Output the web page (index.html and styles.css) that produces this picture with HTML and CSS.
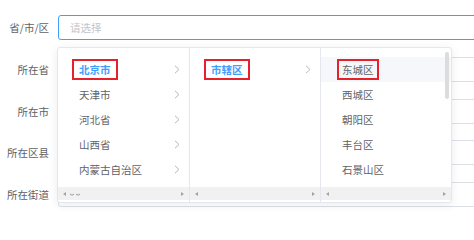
FILE: index.html
```html
<!DOCTYPE html>
<html lang="zh">
<head>
<meta charset="utf-8">
<link rel="stylesheet" href="styles.css">
</head>
<body>
<div class="page">
<div class="form">
  <div class="row"><span class="lbl">省/市/区</span><div class="input focus"><span class="ph">请选择</span></div></div>
  <div class="row"><span class="lbl">所在省</span><div class="input"></div></div>
  <div class="row"><span class="lbl">所在市</span><div class="input"></div></div>
  <div class="row"><span class="lbl">所在区县</span><div class="input"></div></div>
  <div class="row"><span class="lbl">所在街道</span><div class="input"></div></div>
</div>

<div class="panel">
  <div class="menu m1">
    <ul class="list">
      <li class="item active"><span class="mark">北京市</span><svg class="chev" viewBox="0 0 6 9"><polyline points="1,0.8 5,4.5 1,8.2"/></svg></li>
      <li class="item"><span>天津市</span><svg class="chev" viewBox="0 0 6 9"><polyline points="1,0.8 5,4.5 1,8.2"/></svg></li>
      <li class="item"><span>河北省</span><svg class="chev" viewBox="0 0 6 9"><polyline points="1,0.8 5,4.5 1,8.2"/></svg></li>
      <li class="item"><span>山西省</span><svg class="chev" viewBox="0 0 6 9"><polyline points="1,0.8 5,4.5 1,8.2"/></svg></li>
      <li class="item"><span>内蒙古自治区</span><svg class="chev" viewBox="0 0 6 9"><polyline points="1,0.8 5,4.5 1,8.2"/></svg></li>
    </ul>
    <div class="hbar"><i class="arr al"></i><svg class="peek" viewBox="0 0 12 4"><path d="M1 1 Q3 3.5 5 1 M7 1 Q9 3.5 11 1"/></svg><i class="arr ar"></i></div>
  </div>
  <div class="menu m2">
    <ul class="list">
      <li class="item active"><span class="mark">市辖区</span><svg class="chev" viewBox="0 0 6 9"><polyline points="1,0.8 5,4.5 1,8.2"/></svg></li>
    </ul>
    <div class="hbar"><i class="arr al"></i><i class="arr ar"></i></div>
  </div>
  <div class="menu m3">
    <ul class="list">
      <li class="item hover"><span class="mark tight">东城区</span></li>
      <li class="item"><span>西城区</span></li>
      <li class="item"><span>朝阳区</span></li>
      <li class="item"><span>丰台区</span></li>
      <li class="item"><span>石景山区</span></li>
    </ul>
    <div class="hbar"><i class="arr al"></i><i class="arr ar"></i></div>
    <div class="vthumb"></div>
  </div>
</div>
</div>
</body>
</html>
```

FILE: styles.css
```css
html, body {
  margin: 0;
  padding: 0;
  overflow: hidden;
  background: #fff;
  font-family: "Noto Sans CJK SC", "Noto Sans", sans-serif;
  font-size: 10.5px;
  color: #606266;
}

.page {
  position: relative;
  width: 474px;
  height: 212px;
  overflow: hidden;
}

.form {
  padding-top: 15px;
  display: flex;
  flex-direction: column;
  gap: 16.75px;
}

.row {
  display: flex;
  align-items: center;
  height: 25px;
  margin-right: -6px;
}

.lbl {
  width: 49px;
  flex: none;
  text-align: right;
  padding-right: 9px;
  white-space: nowrap;
  line-height: 25px;
}

.input {
  flex: 1;
  height: 23px;
  border: 1px solid #dcdfe6;
  border-radius: 3px;
  display: flex;
  align-items: center;
  padding-left: 11px;
}

.input.focus {
  border-color: #409eff;
}

.ph {
  color: #c0c4cc;
}

.panel {
  position: absolute;
  left: 57px;
  top: 47px;
  height: 154px;
  display: flex;
  border: 1px solid #e4e7ed;
  border-radius: 3px;
  background: #fff;
  box-shadow: 0 2px 10px 0 rgba(0, 0, 0, 0.08);
}

.menu {
  position: relative;
  display: flex;
  flex-direction: column;
  box-sizing: border-box;
  border-right: 1px solid #e4e7ed;
}

.m1 { width: 132px; }
.m2 { width: 131px; }
.m3 { width: 130px; border-right: none; }

.list {
  list-style: none;
  margin: 0;
  padding: 9px 0 0;
  flex: 1;
}

.item {
  height: 25px;
  display: flex;
  align-items: center;
  padding-left: 21px;
  white-space: nowrap;
}

.item.active {
  color: #409eff;
  font-weight: bold;
}

.item.hover {
  background: #f5f7fa;
}

.mark {
  display: inline-block;
  border: 2px solid #e5222b;
  padding: 0 5px;
  margin-left: -7px;
  line-height: 17px;
}

.mark.tight {
  padding: 0 3px;
  margin-left: -5px;
}

.chev {
  width: 6px;
  height: 9px;
  margin-left: auto;
  margin-right: 9px;
  flex: none;
}

.chev polyline {
  fill: none;
  stroke: #b4b7bd;
  stroke-width: 1;
}

.hbar {
  height: 13px;
  margin: 0 0 2px;
  background: #f1f1f1;
  display: flex;
  align-items: center;
  padding: 0 5px;
}

.arr {
  width: 0;
  height: 0;
  border-top: 2px solid transparent;
  border-bottom: 2px solid transparent;
}

.al {
  border-right: 3px solid #a3a3a3;
}

.ar {
  border-left: 3px solid #a3a3a3;
  margin-left: auto;
}

.peek {
  width: 12px;
  height: 4px;
  margin: 3px 0 0 3px;
}

.peek path {
  fill: none;
  stroke: #9a9a9a;
  stroke-width: 1;
}

.vthumb {
  position: absolute;
  right: 2px;
  top: 4px;
  width: 4px;
  height: 47px;
  border-radius: 2px;
  background: #dcdcdc;
}
```
